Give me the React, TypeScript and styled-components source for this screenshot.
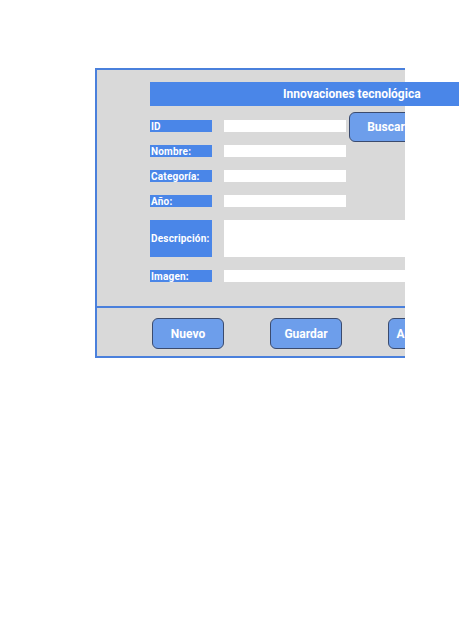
import React from 'react';
import styled, { createGlobalStyle } from 'styled-components';

const GlobalStyle = createGlobalStyle`
    body {
        margin: 0;
        background: #ffffff;
        font-family: Roboto, "Liberation Sans", sans-serif;
    }
`;

const fields = [
    { label: 'Nombre:', row: 2 },
    { label: 'Categoría:', row: 3 },
    { label: 'Año:', row: 4 },
];

const App = () => {
    return (
        <>
            <GlobalStyle />
            <Frame>
                <Body>
                    <TitleBar>Innovaciones tecnológica</TitleBar>
                    <FormGrid>
                        <Label $row={1}>ID</Label>
                        <Field $row={1} />
                        <SearchButton>Buscar</SearchButton>

                        {fields.map((field) => (
                            <React.Fragment key={field.label}>
                                <Label $row={field.row}>{field.label}</Label>
                                <Field $row={field.row} />
                            </React.Fragment>
                        ))}

                        <Label $row={5}>Descripción:</Label>
                        <Field $row={5} $wide />

                        <Label $row={6}>Imagen:</Label>
                        <Field $row={6} $wide />
                    </FormGrid>
                </Body>
                <Footer>
                    <ActionButton>Nuevo</ActionButton>
                    <ActionButton>Guardar</ActionButton>
                    <ActionButton>Actualizar</ActionButton>
                </Footer>
            </Frame>
        </>
    );
};

const Frame = styled.div`
    display: flex;
    flex-direction: column;
    width: 308px;
    margin: 68px 0 0 95px;
    border: 2px solid #4a80dc;
    border-right: none;
    background: #d9d9d9;
`;

const Body = styled.div`
    display: flex;
    flex-direction: column;
    height: 236px;
    padding-left: 53px;
`;

const TitleBar = styled.div`
    flex-shrink: 0;
    width: 309px;
    height: 24px;
    margin-top: 12px;
    padding-left: 133px;
    box-sizing: border-box;
    background: #4a86e8;
    color: #ffffff;
    font-size: 12px;
    font-weight: 700;
    line-height: 24px;
    white-space: nowrap;
`;

const FormGrid = styled.div`
    display: grid;
    grid-template-columns: 62px 122px 72px;
    grid-template-rows: 12px 12px 12px 12px 37px 12px;
    column-gap: 12px;
    row-gap: 13px;
    margin-top: 6px;
    padding-top: 8px;
    overflow: hidden;
`;

const Label = styled.div<{ $row: number }>`
    grid-column: 1;
    grid-row: ${(p) => p.$row};
    display: flex;
    align-items: center;
    padding-left: 1px;
    background: #4a86e8;
    color: #ffffff;
    font-size: 10px;
    font-weight: 700;
    letter-spacing: 0.2px;
    white-space: nowrap;
`;

const Field = styled.div<{ $row: number; $wide?: boolean }>`
    grid-column: ${(p) => (p.$wide ? '2 / 4' : '2')};
    grid-row: ${(p) => p.$row};
    margin-right: ${(p) => (p.$wide ? '-15px' : '0')};
    background: #ffffff;
`;

const SearchButton = styled.button`
    grid-column: 3;
    grid-row: 1;
    align-self: start;
    width: 72px;
    height: 30px;
    margin: -8px 0 0 -9px;
    border: 1px solid #3b4b6e;
    border-radius: 6px;
    background: #6d9eeb;
    color: #ffffff;
    font-family: Roboto, "Liberation Sans", sans-serif;
    font-size: 12px;
    font-weight: 700;
    padding: 0 0 0 2px;
`;

const Footer = styled.div`
    display: flex;
    gap: 46px;
    height: 50px;
    padding: 10px 0 0 55px;
    box-sizing: border-box;
    border-top: 2px solid #4a80dc;
    overflow: hidden;
`;

const ActionButton = styled.button`
    flex-shrink: 0;
    width: 72px;
    height: 31px;
    padding: 0;
    border: 1px solid #3b4b6e;
    border-radius: 6px;
    background: #6d9eeb;
    color: #ffffff;
    font-family: Roboto, "Liberation Sans", sans-serif;
    font-size: 12px;
    font-weight: 700;
    white-space: nowrap;
    display: flex;
    justify-content: center;
    align-items: center;
`;

export default App;
